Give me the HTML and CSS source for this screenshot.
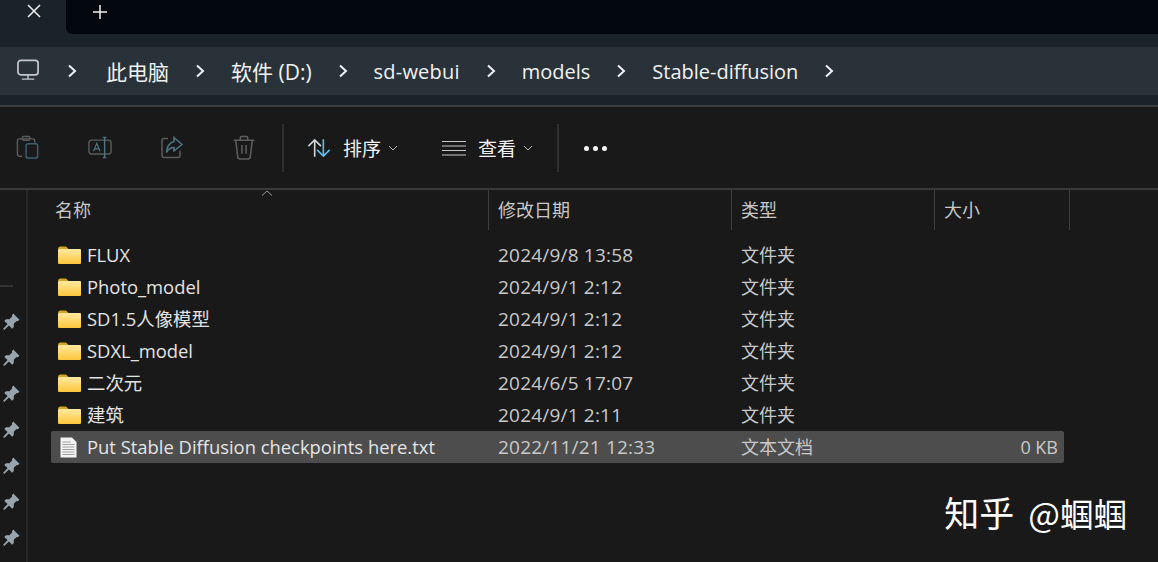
FILE: index.html
```
<!DOCTYPE html>
<html lang="zh">
<head>
<meta charset="utf-8">
<title>Stable-diffusion</title>
<link rel="stylesheet" href="styles.css">
</head>
<body>
<svg class="defs" width="0" height="0" aria-hidden="true">
  <defs>
    <linearGradient id="fg" x1="0" y1="0" x2="0" y2="1"><stop offset="0" stop-color="#ffeaa0"/><stop offset="1" stop-color="#fbc63c"/></linearGradient>
    <symbol id="folder" viewBox="0 0 23 18">
      <path d="M0 3Q0 .5 2 .5H8L11 3.500H0Z" fill="#d9a520"/>
      <rect x="0" y="3" width="23" height="15" rx="1" fill="url(#fg)"/>
    </symbol>
    <symbol id="pin" viewBox="0 0 16 16">
      <path d="M10 .5 15.500 6 14 7.300 13 7 10.500 9.500 10.500 12.500 9 14 6.200 11 2 15 1 14 5 9.800 2 7 3.500 5.500 6.500 5.500 9 3 8.800 2Z" fill="#98a4ac"/>
    </symbol>
    <symbol id="chev" viewBox="0 0 10 14">
      <path d="M2 1.500 8 7 2 12.500" fill="none" stroke="#eef1f3" stroke-width="2"/>
    </symbol>
    <symbol id="caret" viewBox="0 0 10 6">
      <path d="M1 1 5 5 9 1" fill="none" stroke="#b5b5b5" stroke-width="1"/>
    </symbol>
  </defs>
</svg>

<div class="tabbar">
  <div class="tab-current">
    <svg class="tab-icon" viewBox="0 0 14 14"><path d="M1 1 13 13M13 1 1 13" stroke="#f2f2f2" stroke-width="1.500" fill="none"/></svg>
  </div>
  <div class="tab-strip">
    <svg class="tab-icon plus" viewBox="0 0 16 16"><path d="M8 1V15M1 8H15" stroke="#f2f2f2" stroke-width="1.500" fill="none"/></svg>
  </div>
</div>

<nav class="address">
  <svg class="pc" viewBox="0 0 24 22"><rect x="1" y="1" width="21" height="15" rx="3" fill="none" stroke="#c4c8cb" stroke-width="1.800"/><path d="M11.500 16V20M5 20.500H18" stroke="#c4c8cb" stroke-width="1.500" fill="none"/></svg>
  <svg class="sep first"><use href="#chev"/></svg>
  <span class="crumb cjk">此电脑</span>
  <svg class="sep"><use href="#chev"/></svg>
  <span class="crumb cjk">软件 (D:)</span>
  <svg class="sep"><use href="#chev"/></svg>
  <span class="crumb wide">sd-webui</span>
  <svg class="sep"><use href="#chev"/></svg>
  <span class="crumb">models</span>
  <svg class="sep"><use href="#chev"/></svg>
  <span class="crumb">Stable-diffusion</span>
  <svg class="sep"><use href="#chev"/></svg>
</nav>
<div class="under-address"></div>

<div class="toolbar">
  <div class="tool-group">
    <svg class="tool" viewBox="0 0 24 26"><path d="M6 22H3Q1 22 1 20V6Q1 4 3 4H17Q19 4 19 6V8" fill="none" stroke="#5c5c5c" stroke-width="1.500"/><rect x="6" y="1.500" width="8" height="4" rx="1.500" fill="none" stroke="#5c5c5c" stroke-width="1.500"/><rect x="10" y="9" width="12" height="15" rx="2" fill="none" stroke="#3d6070" stroke-width="1.500"/></svg>
    <svg class="tool" viewBox="0 0 26 24"><rect x="1" y="4" width="24" height="15" rx="3" fill="none" stroke="#5c5c5c" stroke-width="1.500"/><path d="M6 16 9.500 7.500 13 16M7.200 13.500H11.800" fill="none" stroke="#4f7585" stroke-width="1.300"/><path d="M16 1H20M18 1V23M16 23H20" fill="none" stroke="#4f7585" stroke-width="1.500"/></svg>
    <svg class="tool" viewBox="0 0 24 24"><path d="M8 3H4Q2 3 2 5V20Q2 22 4 22H18Q20 22 20 20V15" fill="none" stroke="#5c5c5c" stroke-width="1.500"/><path d="M14 2 22 9 14 15.500V12Q9 12 6.500 17 7 8 14 6Z" fill="none" stroke="#4f7585" stroke-width="1.500"/></svg>
    <svg class="tool" viewBox="0 0 22 24"><path d="M1 5H21M7.500 5V2.500Q7.500 1.500 8.500 1.500H13.500Q14.500 1.500 14.500 2.500V5M3 5 5 21Q5.200 23 7 23H15Q16.800 23 17 21L19 5M9 9.500V18M13 9.500V18" fill="none" stroke="#5c5c5c" stroke-width="1.500"/></svg>
  </div>
  <div class="divider"></div>
  <button class="action sort">
    <svg class="sort-icon" viewBox="0 0 26 20"><path d="M8 19V2M1.500 8 8 1.500 14.500 8" fill="none" stroke="#d0d4d7" stroke-width="1.700"/><path d="M17 1V18.500M10.500 12 17 18.500 23.500 12" fill="none" stroke="#62bcec" stroke-width="1.700"/></svg>
    <span>排序</span>
    <svg class="caret"><use href="#caret"/></svg>
  </button>
  <button class="action view">
    <svg class="view-icon" viewBox="0 0 24 16"><path d="M0 1.500H24M0 6H24M0 10.500H24M0 15H24" stroke="#c9c9c9" stroke-width="1.200"/></svg>
    <span>查看</span>
    <svg class="caret"><use href="#caret"/></svg>
  </button>
  <div class="divider second"></div>
  <div class="more"><i></i><i></i><i></i></div>
</div>

<div class="explorer">
  <aside class="side">
    <div class="side-rule"></div>
    <div class="pins">
      <svg class="pin"><use href="#pin"/></svg>
      <svg class="pin"><use href="#pin"/></svg>
      <svg class="pin"><use href="#pin"/></svg>
      <svg class="pin"><use href="#pin"/></svg>
      <svg class="pin"><use href="#pin"/></svg>
      <svg class="pin"><use href="#pin"/></svg>
      <svg class="pin"><use href="#pin"/></svg>
    </div>
  </aside>
  <main class="files">
    <div class="head">
      <div class="col">名称<svg class="sort-up" viewBox="0 0 12 6"><path d="M1 5.500 6 1 11 5.500" fill="none" stroke="#9a9a9a" stroke-width="1"/></svg></div>
      <div class="col">修改日期</div>
      <div class="col">类型</div>
      <div class="col">大小</div>
    </div>
    <div class="rows">
      <div class="row"><div class="name"><svg class="ico"><use href="#folder"/></svg><span class="label">FLUX</span></div><div class="date">2024/9/8 13:58</div><div class="kind">文件夹</div><div></div></div>
      <div class="row"><div class="name"><svg class="ico"><use href="#folder"/></svg><span class="label">Photo_model</span></div><div class="date">2024/9/1 2:12</div><div class="kind">文件夹</div><div></div></div>
      <div class="row"><div class="name"><svg class="ico"><use href="#folder"/></svg><span class="label">SD1.5人像模型</span></div><div class="date">2024/9/1 2:12</div><div class="kind">文件夹</div><div></div></div>
      <div class="row"><div class="name"><svg class="ico"><use href="#folder"/></svg><span class="label">SDXL_model</span></div><div class="date">2024/9/1 2:12</div><div class="kind">文件夹</div><div></div></div>
      <div class="row"><div class="name"><svg class="ico"><use href="#folder"/></svg><span class="label">二次元</span></div><div class="date">2024/6/5 17:07</div><div class="kind">文件夹</div><div></div></div>
      <div class="row"><div class="name"><svg class="ico"><use href="#folder"/></svg><span class="label">建筑</span></div><div class="date">2024/9/1 2:11</div><div class="kind">文件夹</div><div></div></div>
      <div class="row selected">
        <div class="name"><svg class="ico doc" viewBox="0 0 17 21"><path d="M.5.5H12L16.500 5V20.500H.5Z" fill="#f3f3f3"/><path d="M2.500 5H11M2.500 7.500H14.500M2.500 10H14.500M2.500 12.500H14.500M2.500 15H14.500M2.500 17.500H14.500" stroke="#8c8c8c" stroke-width=".8"/></svg><span class="label">Put Stable Diffusion checkpoints here.txt</span></div>
        <div class="date">2022/11/21 12:33</div><div class="kind">文本文档</div><div class="size">0 KB</div>
      </div>
    </div>
    <div class="watermark"><span class="brand">知乎</span><span>@蝈蝈</span></div>
  </main>
</div>
</body>
</html>
```
FILE: styles.css
```
* { box-sizing: border-box; }
html, body { margin: 0; height: 562px; overflow: hidden; }
body {
  width: 1158px;
  background: #191919;
  color: #e6e6e6;
  font-family: "Open Sans", "Noto Sans CJK SC", sans-serif;
  font-size: 18px;
  display: flex;
  flex-direction: column;
}
.defs { position: absolute; }

.tabbar { height: 47px; background: #1b232a; display: flex; align-items: flex-start; }
.tab-current { width: 66px; height: 34px; display: flex; justify-content: center; padding: 4px 0 0 2px; }
.tab-strip { flex: 1; height: 34px; background: #03070e; border-bottom-left-radius: 6px; padding: 4px 0 0 26px; }
.tab-icon { width: 14px; height: 14px; display: block; }
.tab-icon.plus { width: 16px; height: 16px; }

.address {
  height: 48px;
  background: #2a3239;
  display: flex;
  align-items: center;
  padding-left: 17px;
  font-size: 20px;
  color: #f0f2f3;
}
.pc { width: 23px; height: 22px; margin-top: -2px; }
.sep { width: 10px; height: 14px; margin: 0 26px; }
.sep.first { margin: 0 29px 0 27px; }
.crumb { white-space: nowrap; }
.crumb.cjk { font-size: 21px; }
.crumb.wide { letter-spacing: .2px; }
.under-address { height: 10px; background: #1b232a; }

.toolbar {
  height: 85px;
  background: #191919;
  border-top: 2px solid #3c3c3c;
  border-bottom: 2px solid #3a3a3a;
  display: flex;
  align-items: center;
}
.tool-group { display: flex; align-items: center; gap: 48px; padding-left: 16px; width: 282px; }
.tool { width: 24px; height: 25px; }
.divider { width: 2px; height: 48px; background: #303030; }
.divider.second { margin-left: 24px; }
.action {
  display: flex;
  align-items: center;
  background: none;
  border: 0;
  padding: 0;
  color: #f2f2f2;
  font: inherit;
  font-size: 19px;
}
.sort { margin-left: 23px; }
.view { margin-left: 44px; }
.sort-icon { width: 25px; height: 20px; margin-right: 11px; }
.view-icon { width: 24px; height: 16px; margin-right: 12px; }
.caret { width: 10px; height: 6px; margin-left: 7px; }
.more { display: flex; gap: 4px; margin: 2px 0 0 25px; }
.more i { width: 5px; height: 5px; border-radius: 50%; background: #f5f5f5; }

.explorer { flex: 1; display: flex; min-height: 0; }
.side { width: 28px; border-right: 2px solid #262626; }
.side-rule { height: 2px; width: 13px; background: #333; margin-top: 95px; }
.pins { display: flex; flex-direction: column; gap: 18px; margin-top: 26px; padding-left: 2px; }
.pin { width: 18px; height: 18px; display: block; }

.files { flex: 1; position: relative; }
.head { display: grid; grid-template-columns: 461px 243px 203px 135px; height: 40px; color: #c8c8c8; }
.col { position: relative; padding: 6px 0 0 9px; border-right: 1px solid #3f3f3f; font-size: 18px; }
.col:first-child { padding-left: 27px; }
.sort-up { position: absolute; left: 233px; top: 0; width: 12px; height: 6px; }
.rows { padding: 0 0 0 23px; margin-top: 9px; width: 1036px; }
.row {
  display: grid;
  height: 32px;
  grid-template-columns: 437px 243px 203px 130px;
  align-items: center;
  color: #c9c9c9;
  border-radius: 2px;
}
.row > div { padding-left: 10px; white-space: nowrap; }
.row .name { display: flex; align-items: center; padding-left: 7px; color: #e4e4e4; font-size: 18.400px; }
.label { margin-top: -2px; }
.row .kind { margin-top: -2px; }
.row .date { font-size: 19px; letter-spacing: .2px; }
.ico { width: 23px; height: 18px; margin-right: 6px; flex: none; }
.ico.doc { width: 17px; height: 21px; margin: 0 10px 0 2px; }
.selected { background: #4d4d4d; }
.row .size { padding: 0 6px 0 0; text-align: right; }
.watermark {
  position: absolute;
  right: 31px;
  bottom: 33px;
  display: flex;
  align-items: baseline;
  gap: 14px;
  font-family: "Noto Sans CJK SC", sans-serif;
  font-size: 33.500px;
  color: #fff;
  line-height: 1;
}
.brand { font-size: 35px; font-weight: 400; }
```
